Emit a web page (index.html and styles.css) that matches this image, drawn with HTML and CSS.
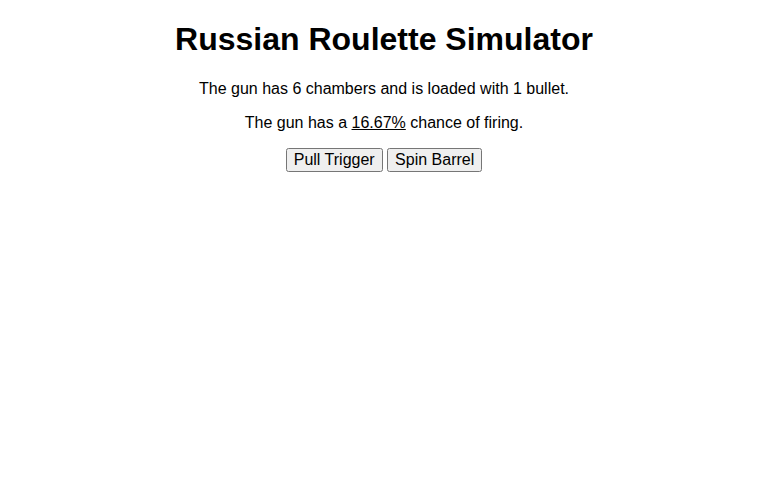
FILE: index.html
```html
<!DOCTYPE html>
<html>
  <head>
    <title>Russian Roulette Simulator</title>
    <meta name="viewport" content="width=device-width, initial-scale=1"/>
    <link rel="stylesheet" href="styles.css">
  </head>
  <body>
    <div id='app'>
      <h1>Russian Roulette Simulator</h1>
      <p>The gun has <span id='chambers'>6</span> chambers and is loaded with <span id='bullets'>1</span> bullet.</p>
      <p>The gun has a <u id='odds'>16.67%</u> chance of firing.</p>
      <div class='controls'>
        <button id='trigger'>Pull Trigger</button>
        <button id='spin'>Spin Barrel</button>
      </div>
    </div>
  </body>
</html>
```

FILE: styles.css
```css
body {
  margin: 0;
  font-family: "Liberation Sans", Arial, sans-serif;
  color: #000;
  background: #fff;
}

#app {
  text-align: center;
}

h1 {
  font-size: 2em;
  margin: 0.67em 0;
}

button {
  font-family: inherit;
  font-size: 16px;
}
```
